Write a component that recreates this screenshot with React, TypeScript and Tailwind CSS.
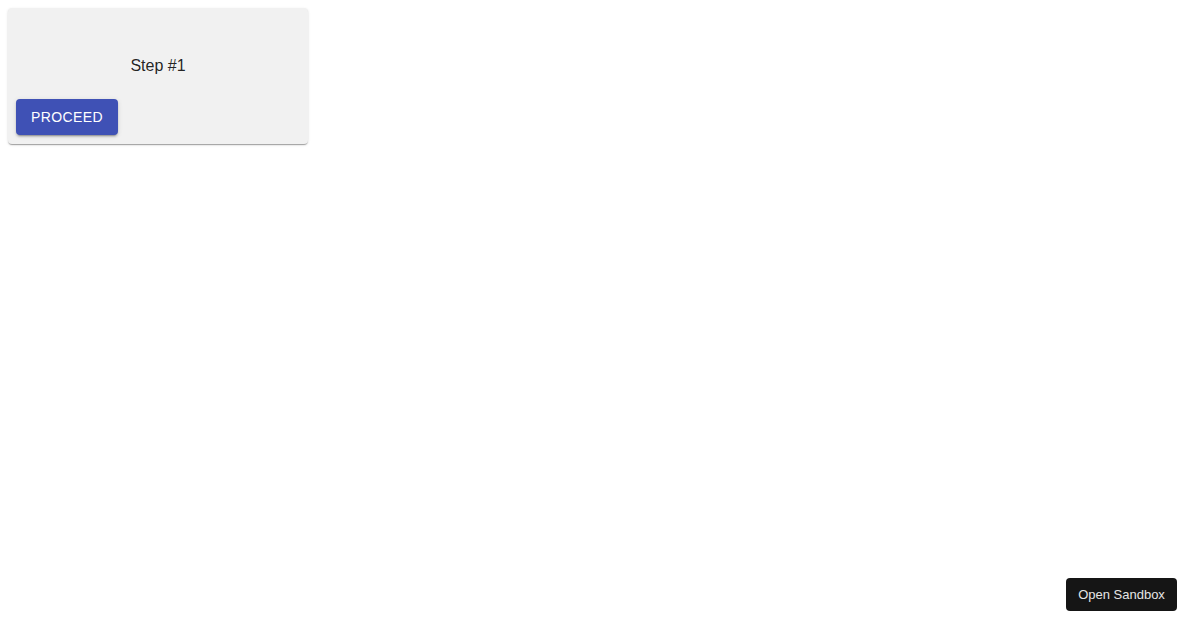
export default function App() {
  return (
    <div className="min-h-screen bg-white p-2 font-['Liberation_Sans',Arial,sans-serif]">
      <div className="w-[300px] rounded bg-[#f1f1f1] shadow-[0px_2px_1px_-1px_rgba(0,0,0,0.2),0px_1px_1px_0px_rgba(0,0,0,0.14),0px_1px_3px_0px_rgba(0,0,0,0.12)]">
        <div className="px-4 pt-[46px] pb-[13px] text-center text-base leading-6 text-[rgba(0,0,0,0.87)]">
          Step #1
        </div>
        <div className="flex items-center px-2 pt-2 pb-[9px]">
          <button className="h-9 w-[102px] rounded bg-[#3f51b5] text-sm font-normal uppercase tracking-[0.02857em] text-white shadow-[0px_3px_1px_-2px_rgba(0,0,0,0.2),0px_2px_2px_0px_rgba(0,0,0,0.14),0px_1px_5px_0px_rgba(0,0,0,0.12)]">
            Proceed
          </button>
        </div>
      </div>
      <button className="fixed right-[23px] bottom-[19px] h-[33px] w-[111px] rounded bg-[#151515] text-[13px] text-[#e5e5e5]">
        Open Sandbox
      </button>
    </div>
  );
}
